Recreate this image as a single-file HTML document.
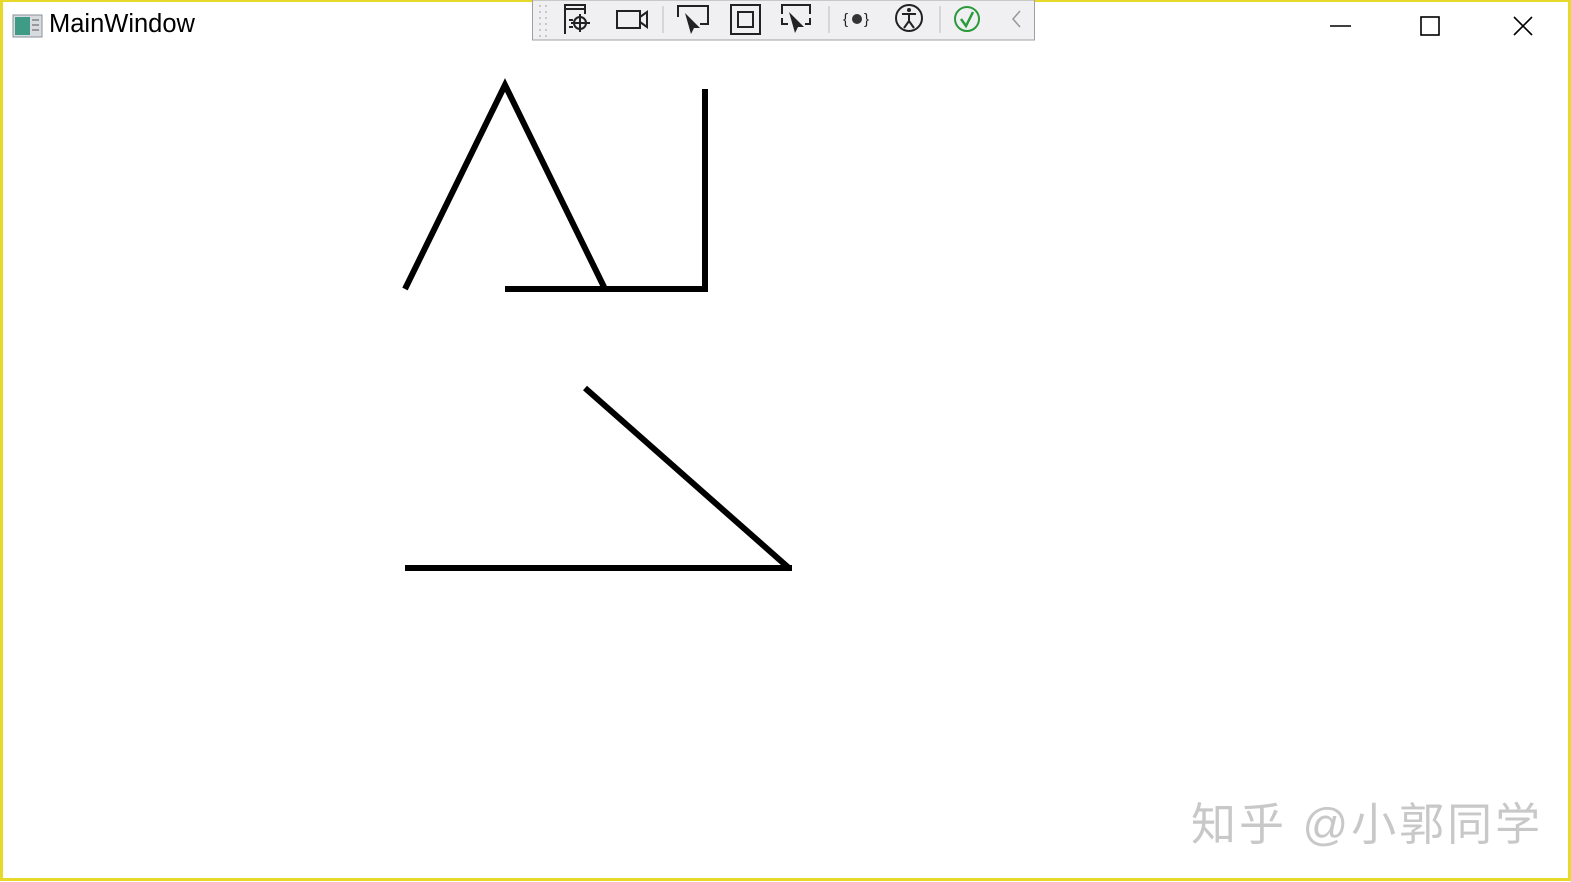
<!DOCTYPE html>
<html><head><meta charset="utf-8"><style>
html,body{margin:0;padding:0;width:1571px;height:882px;overflow:hidden;background:#fff;font-family:"Liberation Sans","Noto Sans CJK SC",sans-serif}
.frame{position:absolute;left:0;top:0;width:1565px;height:876px;border:3px solid #e8d82a;border-top-width:2px}
.title{position:absolute;left:49px;top:10px;font-size:25.5px;color:#000;font-family:"Liberation Sans",sans-serif}
.wm{position:absolute;left:1191px;top:788px;font-size:45px;color:#c8c8c8;letter-spacing:3px;white-space:nowrap}
</style></head><body>
<div class="frame"></div>
<svg width="1571" height="882" style="position:absolute;left:0;top:0">
<rect x="13" y="15" width="29" height="22" fill="#d8dce0" stroke="#8a9098"/>
<rect x="15" y="17" width="15" height="18" fill="#3f9a86"/>
<rect x="32" y="19" width="7" height="2" fill="#999"/><rect x="32" y="24" width="7" height="2" fill="#999"/><rect x="32" y="29" width="7" height="2" fill="#999"/>
<line x1="1330" y1="26" x2="1351" y2="26" stroke="#000" stroke-width="1.5"/>
<rect x="1421" y="17" width="18" height="18" fill="none" stroke="#000" stroke-width="1.6"/>
<path d="M1514 17 L1532 35 M1532 17 L1514 35" stroke="#000" stroke-width="1.6"/>
<rect x="532.5" y="0" width="502" height="40" fill="#f0f0f2" stroke="#a0a0a0"/>
<g fill="#bbb"><circle cx="540" cy="6" r="1"/><circle cx="546" cy="6" r="1"/><circle cx="540" cy="12" r="1"/><circle cx="546" cy="12" r="1"/><circle cx="540" cy="18" r="1"/><circle cx="546" cy="18" r="1"/><circle cx="540" cy="24" r="1"/><circle cx="546" cy="24" r="1"/><circle cx="540" cy="30" r="1"/><circle cx="546" cy="30" r="1"/><circle cx="540" cy="36" r="1"/><circle cx="546" cy="36" r="1"/></g>
<g stroke="#222" stroke-width="2" fill="none">
<path d="M565 34 V5 H585 V14 M565 9 H585"/><path d="M569 20 H573 M569 27 H573"/><circle cx="580" cy="23" r="6"/><path d="M580 14 V32 M571 23 H590"/>
<rect x="617" y="11" width="23" height="17"/><path d="M640 17 L647 12 V27 L640 22"/>
<path d="M678 17 V6 H708 V24 H700"/>
<rect x="731" y="5" width="29" height="29"/><rect x="738" y="12" width="15" height="15"/>
<path d="M782 14 V5 H810 V14 M810 18 V24 H805 M782 18 V24 H788"/>
<circle cx="909" cy="18" r="13"/><path d="M902 14 H916 M909 14 V21 L904 28 M909 21 L914 28"/>
</g>
<path d="M685 13 L700 28 L694 28 L691 34 Z" fill="#222"/>
<path d="M789 12 L804 27 L798 27 L795 33 Z" fill="#222"/>
<text x="843" y="24" font-size="15" font-family="Liberation Sans" fill="#222">{</text><circle cx="857" cy="19" r="5" fill="#333"/><text x="864" y="24" font-size="15" font-family="Liberation Sans" fill="#222">}</text>
<circle cx="909" cy="10" r="2" fill="#222"/>
<circle cx="967" cy="19" r="12" fill="none" stroke="#2a9a3a" stroke-width="2"/><path d="M961 19 L966 26 L973 12" stroke="#2a9a3a" stroke-width="2.5" fill="none"/>
<path d="M1020 11 L1013 19 L1020 27" stroke="#999" stroke-width="1.5" fill="none"/>
<g stroke="#bbb"><line x1="663" y1="6" x2="663" y2="33"/><line x1="829" y1="6" x2="829" y2="33"/><line x1="940" y1="6" x2="940" y2="33"/></g>
<g stroke="#000" stroke-width="6" fill="none">
<polyline points="405,289 505,85 605,289"/>
<line x1="505" y1="289" x2="708" y2="289"/>
<line x1="705" y1="89" x2="705" y2="292"/>
<line x1="585" y1="388" x2="790" y2="569"/>
<line x1="405" y1="568" x2="792" y2="568"/>
</g>
</svg>
<div class="title">MainWindow</div>
<div class="wm">知乎 @小郭同学</div>
</body></html>
